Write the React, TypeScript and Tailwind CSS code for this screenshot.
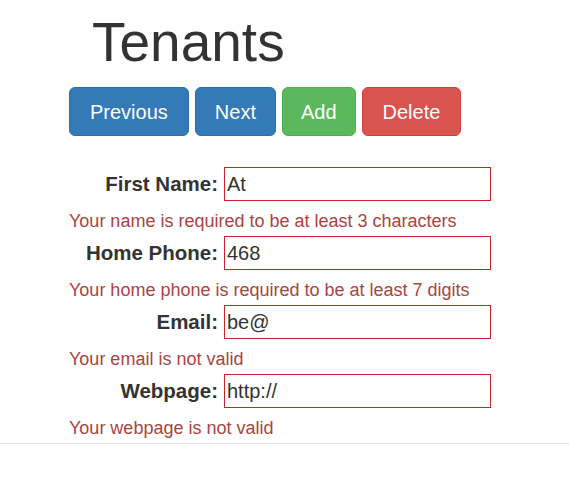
import { useState } from "react";

type Field = { label: string; value: string; error: string };

const FIELDS: Field[] = [
  { label: "First Name:", value: "At", error: "Your name is required to be at least 3 characters" },
  { label: "Home Phone:", value: "468", error: "Your home phone is required to be at least 7 digits" },
  { label: "Email:", value: "be@", error: "Your email is not valid" },
  { label: "Webpage:", value: "http://", error: "Your webpage is not valid" },
];

export default function App() {
  const [values, setValues] = useState(FIELDS.map((f) => f.value));

  return (
    <div className="min-h-[495px] bg-white font-['Liberation_Sans',Arial,sans-serif] text-[#333]">
      <div className="pl-[69px]">
        {/* Title */}
        <h1 className="pt-[15px] pl-[23px] text-[55px] leading-none font-normal">Tenants</h1>

        {/* Toolbar */}
        <div className="mt-[17px] flex gap-[6px]">
          <button className="h-[49px] rounded-[6px] border border-[#2e6da4] bg-[#337ab7] px-[20px] text-[20px] text-white">Previous</button>
          <button className="h-[49px] rounded-[6px] border border-[#2e6da4] bg-[#337ab7] px-[19px] text-[20px] text-white">Next</button>
          <button className="h-[49px] rounded-[6px] border border-[#4cae4c] bg-[#5cb85c] px-[18px] text-[20px] text-white">Add</button>
          <button className="h-[49px] rounded-[6px] border border-[#d43f3a] bg-[#d9534f] px-[20px] text-[20px] text-white">Delete</button>
        </div>

        {/* Form */}
        <div className="mt-[31px]">
          {FIELDS.map((f, i) => (
            <div key={f.label}>
              <div className="flex items-center gap-[6px]">
                <label className="w-[149px] text-right text-[20.5px] font-bold">{f.label}</label>
                <input
                  value={values[i]}
                  onChange={(e) => setValues((v) => v.map((x, j) => (j === i ? e.target.value : x)))}
                  className="h-[34px] w-[267px] border border-[#c8232c] px-[2px] text-[20px] text-[#333] outline-none"
                />
              </div>
              <div className="mt-[10px] mb-[5px] text-[18px] leading-[20px] text-[#a94442]">{f.error}</div>
            </div>
          ))}
        </div>
      </div>
      <hr className="border-t border-[#ddd]" />
    </div>
  );
}
